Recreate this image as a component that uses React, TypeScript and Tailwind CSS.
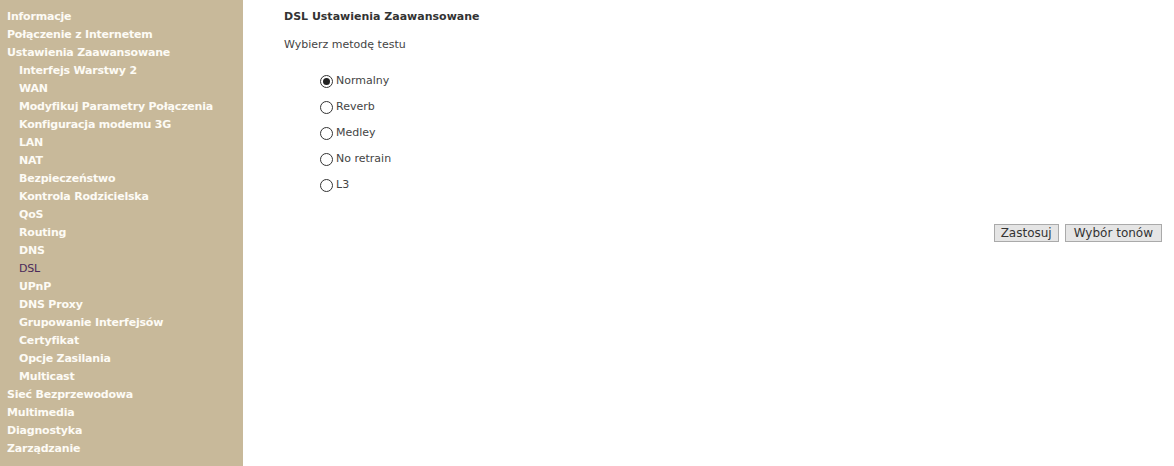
import React, { useState } from 'react';

const menu: { label: string; sub?: boolean; active?: boolean }[] = [
  { label: 'Informacje' },
  { label: 'Połączenie z Internetem' },
  { label: 'Ustawienia Zaawansowane' },
  { label: 'Interfejs Warstwy 2', sub: true },
  { label: 'WAN', sub: true },
  { label: 'Modyfikuj Parametry Połączenia', sub: true },
  { label: 'Konfiguracja modemu 3G', sub: true },
  { label: 'LAN', sub: true },
  { label: 'NAT', sub: true },
  { label: 'Bezpieczeństwo', sub: true },
  { label: 'Kontrola Rodzicielska', sub: true },
  { label: 'QoS', sub: true },
  { label: 'Routing', sub: true },
  { label: 'DNS', sub: true },
  { label: 'DSL', sub: true, active: true },
  { label: 'UPnP', sub: true },
  { label: 'DNS Proxy', sub: true },
  { label: 'Grupowanie Interfejsów', sub: true },
  { label: 'Certyfikat', sub: true },
  { label: 'Opcje Zasilania', sub: true },
  { label: 'Multicast', sub: true },
  { label: 'Sieć Bezprzewodowa' },
  { label: 'Multimedia' },
  { label: 'Diagnostyka' },
  { label: 'Zarządzanie' },
];

const modes = ['Normalny', 'Reverb', 'Medley', 'No retrain', 'L3'];

const Radio = ({ checked }: { checked: boolean }) => (
  <span className="w-[13px] h-[13px] rounded-full border border-[#333] bg-white flex items-center justify-center">
    {checked && <span className="w-[7px] h-[7px] rounded-full bg-[#222]" />}
  </span>
);

export default function App() {
  const [mode, setMode] = useState('Normalny');

  return (
    <div className="flex w-[1174px] h-[466px] bg-white overflow-hidden font-['DejaVu_Sans',sans-serif]">
      {/* Sidebar */}
      <div className="w-[243px] shrink-0 bg-[#c8b99a] pt-[8px] pl-[7px]">
        {menu.map((item) => (
          <div
            key={item.label}
            className={`h-[18px] leading-[18px] text-[11px] whitespace-nowrap tracking-[-0.2px] ${item.sub ? 'pl-[12px]' : ''} ${
              item.active ? 'text-[#4b2a5a] font-normal' : 'text-[#fdfbf5] font-bold'
            }`}
          >
            {item.label}
          </div>
        ))}
      </div>

      {/* Content */}
      <div className="flex-1 pl-[41px] pr-[12px] pt-[9px] text-[#444] text-[11px]">
        <div className="font-bold leading-[16px] text-[#333]">DSL Ustawienia Zaawansowane</div>
        <div className="mt-[12px] leading-[16px]">Wybierz metodę testu</div>

        <div className="mt-[15px] pl-[36px] flex flex-col">
          {modes.map((m) => (
            <label
              key={m}
              className="h-[26px] flex items-center gap-[3px] cursor-pointer"
              onClick={() => setMode(m)}
            >
              <Radio checked={mode === m} />
              <span>{m}</span>
            </label>
          ))}
        </div>

        <div className="mt-[26px] flex justify-end gap-[6px]">
          <button className="h-[18px] px-[6px] bg-[#e5e5e5] border border-[#aaa] text-[12px] text-[#333] leading-none">
            Zastosuj
          </button>
          <button className="h-[18px] px-[8px] bg-[#e5e5e5] border border-[#aaa] text-[12px] text-[#333] leading-none">
            Wybór tonów
          </button>
        </div>
      </div>
    </div>
  );
}
